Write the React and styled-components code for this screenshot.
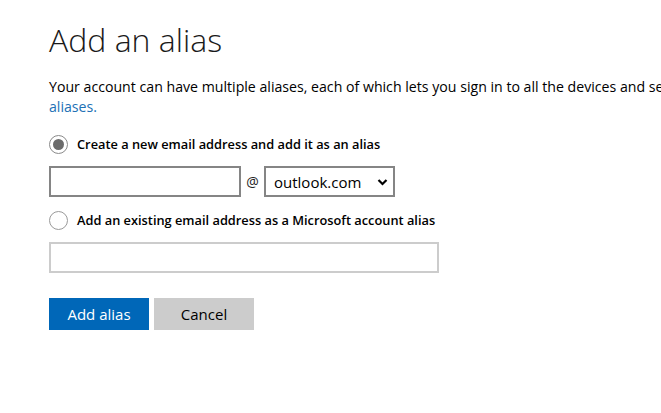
import React from "react";
import styled, { createGlobalStyle } from "styled-components";

const Global = createGlobalStyle`
  html, body { margin: 0; padding: 0; background: #fff; overflow: hidden; }
  body { font-family: "Open Sans", "Noto Sans", sans-serif; color: #000; }
`;

const Page = styled.main`
  width: 661px;
  height: 413px;
  padding: 18px 0 0 49px;
  box-sizing: border-box;
  display: flex;
  flex-direction: column;
  overflow: hidden;
`;

const Title = styled.h1`
  margin: 0;
  font-family: "Open Sans", sans-serif;
  font-weight: 300;
  font-size: 32px;
  line-height: 44px;
  color: #1a1a1a;
`;

const Intro = styled.p`
  margin: 15px 0 0;
  font-size: 14.15px;
  line-height: 20px;
  white-space: nowrap;
  color: #000;
`;

const Link = styled.a`
  color: #2171b5;
  text-decoration: none;
`;

const RadioRow = styled.label`
  display: flex;
  align-items: center;
  gap: 9px;
  margin-top: ${(p) => p.$top}px;
  font-size: 12.8px;
  font-weight: 600;
  height: 20px;
`;

const RadioCircle = styled.span`
  width: 17px;
  height: 17px;
  border: 1.5px solid ${(p) => (p.$checked ? "#8a8a8a" : "#9a9a9a")};
  border-radius: 50%;
  display: flex;
  align-items: center;
  justify-content: center;
  flex: none;
  &::after {
    content: "";
    display: ${(p) => (p.$checked ? "block" : "none")};
    width: 11px;
    height: 11px;
    border-radius: 50%;
    background: #6b6b6b;
  }
`;

const FieldRow = styled.div`
  display: flex;
  align-items: center;
  margin-top: ${(p) => p.$top}px;
`;

const TextBox = styled.div`
  width: ${(p) => p.$w}px;
  height: 31px;
  box-sizing: border-box;
  border: 2px solid ${(p) => (p.$light ? "#cccccc" : "#858585")};
  background: #fff;
`;

const At = styled.span`
  font-size: 14px;
  width: 23px;
  text-align: center;
  color: #222;
`;

const Select = styled.div`
  width: 131px;
  height: 31px;
  box-sizing: border-box;
  border: 2px solid #858585;
  display: flex;
  align-items: center;
  justify-content: space-between;
  padding: 0 5px 0 8px;
  font-size: 15px;
`;

const Buttons = styled.div`
  display: flex;
  gap: 5px;
  margin-top: 25px;
`;

const Button = styled.button`
  width: 100px;
  height: 32px;
  border: none;
  margin: 0;
  padding: 0;
  font-family: "Open Sans", sans-serif;
  font-size: 15px;
  background: ${(p) => (p.$primary ? "#0067b8" : "#cccccc")};
  color: ${(p) => (p.$primary ? "#fff" : "#000")};
`;

function Chevron() {
  return (
    <svg width="11" height="8" viewBox="0 0 11 8">
      <path d="M1.5 2 L5.5 6 L9.5 2" fill="none" stroke="#000" strokeWidth="2.2" />
    </svg>
  );
}

export default function App() {
  return (
    <>
      <Global />
      <Page>
        <Title>Add an alias</Title>
        <Intro>
          Your account can have multiple aliases, each of which lets you sign in to all the devices and services you use with your Microsoft account. Learn more about
          <br />
          <Link href="#">aliases.</Link>
        </Intro>
        <RadioRow $top={17}>
          <RadioCircle $checked />
          Create a new email address and add it as an alias
        </RadioRow>
        <FieldRow $top={12}>
          <TextBox $w={192} />
          <At>@</At>
          <Select>
            <span>outlook.com</span>
            <Chevron />
          </Select>
        </FieldRow>
        <RadioRow $top={13}>
          <RadioCircle />
          Add an existing email address as a Microsoft account alias
        </RadioRow>
        <FieldRow $top={12}>
          <TextBox $w={390} $light />
        </FieldRow>
        <Buttons>
          <Button $primary>Add alias</Button>
          <Button>Cancel</Button>
        </Buttons>
      </Page>
    </>
  );
}
